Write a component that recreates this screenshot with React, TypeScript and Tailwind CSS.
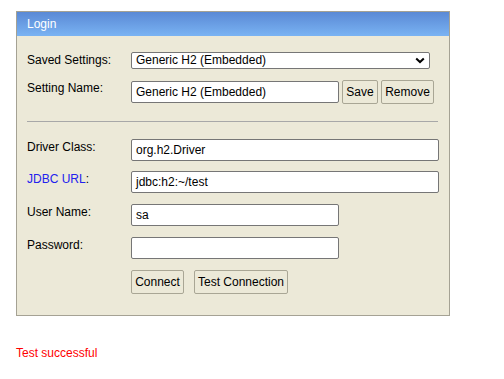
import { ReactNode } from "react";

const font = { fontFamily: '"Liberation Sans", Arial, sans-serif' };

function Row({ label, children, className = "" }: { label: ReactNode; children: ReactNode; className?: string }) {
  return (
    <div className={`flex items-start ${className}`}>
      <div className="w-[104px] shrink-0 leading-[14px] pt-[1px]">{label}</div>
      {children}
    </div>
  );
}

function Input({ value, width }: { value: string; width: string }) {
  return (
    <div className={`${width} h-[22px] shrink-0 border border-[#767676] bg-white px-[4px] leading-[20px] rounded-[2px]`}>
      {value}
    </div>
  );
}

function Button({ children, width }: { children: ReactNode; width: string }) {
  return (
    <div
      className={`${width} h-[24px] shrink-0 border border-[#a9a695] rounded-[2px] bg-[#ece9d8] text-center leading-[22px]`}
    >
      {children}
    </div>
  );
}

export default function App() {
  return (
    <div className="min-h-[379px] bg-white text-[12px] text-black" style={font}>
      <div className="pl-[16px] pt-[11px]">
        <div className="w-[434px] border border-[#a5a294] bg-[#ece9d8] pb-[21px]">
          <div className="h-[24px] bg-gradient-to-b from-[#5a89d5] to-[#7ab3f3] pl-[10px] leading-[24px] text-white">
            Login
          </div>

          <div className="pl-[10px]">
            <Row label="Saved Settings:" className="mt-[16px]">
              <div className="relative h-[17px] w-[299px] border border-[#767676] rounded-[2px] bg-white pl-[4px] leading-[15px]">
                Generic H2 (Embedded)
                <svg
                  className="absolute right-[4px] top-[4px]"
                  width="10"
                  height="7"
                  viewBox="0 0 10 7"
                  fill="none"
                >
                  <path d="M1.2 1.5l3.8 3.6 3.8-3.6" stroke="#000" strokeWidth="2" />
                </svg>
              </div>
            </Row>

            <Row label="Setting Name:" className="mt-[11px]">
              <div className="flex items-center h-[24px] gap-[3px]">
                <Input value="Generic H2 (Embedded)" width="w-[208px]" />
                <Button width="w-[36px]">Save</Button>
                <Button width="w-[53px]">Remove</Button>
              </div>
            </Row>

            <div className="mt-[17px] h-px w-[411px] bg-[#a8a8a8]" />

            <Row label="Driver Class:" className="mt-[17px]">
              <Input value="org.h2.Driver" width="w-[308px]" />
            </Row>
            <Row
              label={
                <>
                  <span className="text-[#2222ee]">JDBC URL</span>:
                </>
              }
              className="mt-[10px]"
            >
              <Input value="jdbc:h2:~/test" width="w-[308px]" />
            </Row>
            <Row label="User Name:" className="mt-[11px]">
              <Input value="sa" width="w-[208px]" />
            </Row>
            <Row label="Password:" className="mt-[11px]">
              <Input value="" width="w-[208px]" />
            </Row>

            <div className="mt-[11px] flex gap-[10px] pl-[104px]">
              <Button width="w-[53px]">Connect</Button>
              <Button width="w-[94px]">Test Connection</Button>
            </div>
          </div>
        </div>

        <div className="mt-[30px] text-[#ff0000] leading-[14px]">Test successful</div>
      </div>
    </div>
  );
}
